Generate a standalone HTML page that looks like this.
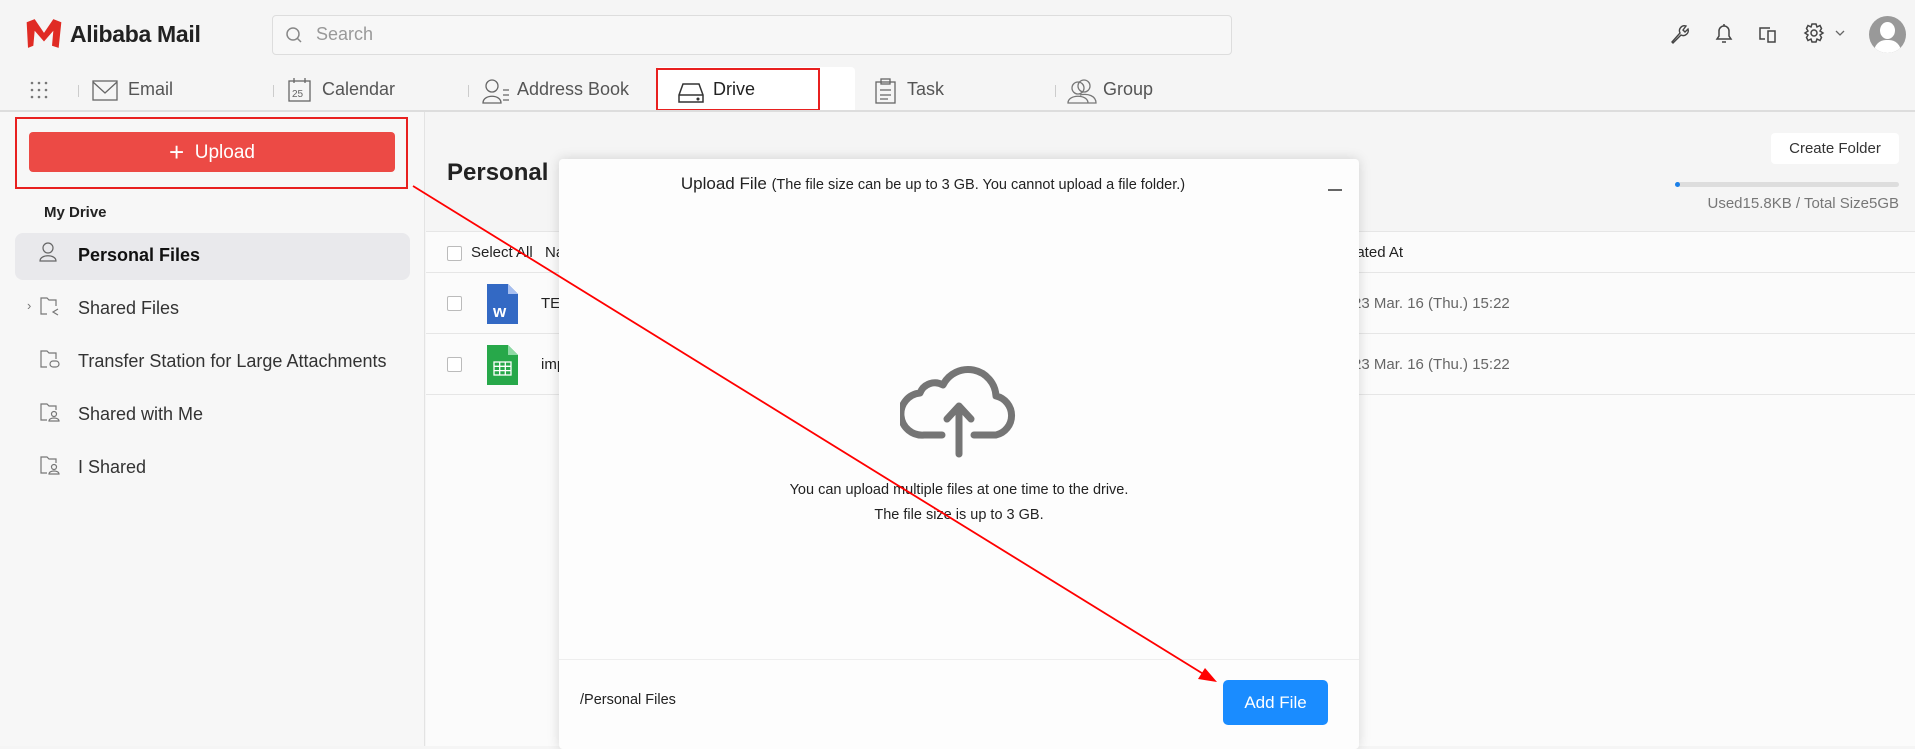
<!DOCTYPE html>
<html><head><meta charset="utf-8">
<style>
*{box-sizing:border-box;margin:0;padding:0}
body{width:1915px;height:746px;overflow:hidden;background:#f5f5f5;font-family:"Liberation Sans",Arial,sans-serif;color:#222;position:relative}
.abs{position:absolute}
.t{white-space:nowrap}
.nav{font-size:18px;color:#555;top:79px}
.side{font-size:18px;color:#333}
.cb{position:absolute;width:15px;height:15px;border:1.5px solid #bbb;background:#fff;border-radius:2px}
.line{position:absolute;height:1px;background:#e6e6e6}
</style></head><body>
<svg class="abs" style="left:24px;top:18px" width="40" height="32" viewBox="0 0 30 30" preserveAspectRatio="none"><path d="M2 4 L8 1 L15 14 L22 1 L28 4 L26 28 L21 26 L22 12 L15 22 L8 12 L7 26 L3 28 Z" fill="#e02b24"/></svg>
<div class="abs t" style="left:70px;top:21px;font-size:23px;font-weight:bold;color:#222;letter-spacing:-0.3px">Alibaba Mail</div>
<div class="abs" style="left:272px;top:15px;width:960px;height:40px;border:1px solid #ddd;border-radius:4px;background:#f7f7f7"></div>
<svg class="abs" style="left:285px;top:26px" width="18" height="18"><circle cx="8" cy="8" r="6" fill="none" stroke="#888" stroke-width="1.5"/><path d="M12.5 12.5 L16 16" stroke="#888" stroke-width="1.5"/></svg>
<div class="abs t" style="left:316px;top:24px;font-size:18px;color:#999">Search</div>
<svg class="abs" style="left:1668px;top:23px" width="22" height="22" viewBox="0 0 22 22" fill="none" stroke="#444" stroke-width="1.4"><path d="M4 19 L12 10 A5 5 0 0 1 18 3 L15 7 L17 9 L20 6 A5 5 0 0 1 13 12 L5 20 Z"/></svg>
<svg class="abs" style="left:1713px;top:22px" width="22" height="24" viewBox="0 0 22 24" fill="none" stroke="#444" stroke-width="1.5"><path d="M4 17 H18 L16 14 V9 A5 5 0 0 0 6 9 V14 Z"/><path d="M9 20 H13"/><path d="M11 2 V4"/></svg>
<svg class="abs" style="left:1757px;top:23px" width="22" height="22" viewBox="0 0 22 22" fill="none" stroke="#444" stroke-width="1.5"><path d="M13 5 H3 V16 H8"/><rect x="11" y="8" width="7" height="11"/></svg>
<svg class="abs" style="left:1803px;top:22px" width="22" height="22" viewBox="0 0 22 22" fill="none" stroke="#444" stroke-width="1.5"><circle cx="11" cy="11" r="3"/><path d="M9 2 H13 L14 5 L17 3.5 L18.5 6.5 L17 9 L20 11 L17 13 L18.5 15.5 L17 18.5 L14 17 L13 20 H9 L8 17 L5 18.5 L3.5 15.5 L5 13 L2 11 L5 9 L3.5 6.5 L5 3.5 L8 5 Z"/></svg>
<svg class="abs" style="left:1835px;top:29px" width="10" height="8"><path d="M1 2 L5 6 L9 2" fill="none" stroke="#666" stroke-width="1.3"/></svg>
<div class="abs" style="left:1869px;top:16px;width:37px;height:37px;border-radius:50%;background:#999;overflow:hidden">
<div class="abs" style="left:11px;top:6px;width:15px;height:17px;border-radius:50%;background:#fff"></div>
<div class="abs" style="left:5px;top:24px;width:27px;height:20px;border-radius:12px 12px 0 0;background:#fff"></div></div>
<svg class="abs" style="left:30px;top:81px" width="18" height="18"><g fill="#777"><circle cx="2" cy="2" r="1.3"/><circle cx="9" cy="2" r="1.3"/><circle cx="16" cy="2" r="1.3"/><circle cx="2" cy="9" r="1.3"/><circle cx="9" cy="9" r="1.3"/><circle cx="16" cy="9" r="1.3"/><circle cx="2" cy="16" r="1.3"/><circle cx="9" cy="16" r="1.3"/><circle cx="16" cy="16" r="1.3"/></g></svg>
<div class="abs" style="left:78px;top:85px;width:1px;height:12px;background:#ccc"></div>
<svg class="abs" style="left:92px;top:80px" width="26" height="22"><rect x="1" y="1" width="24" height="19" fill="none" stroke="#666" stroke-width="1.3"/><path d="M1 2 L13 13 L25 2" fill="none" stroke="#666" stroke-width="1.3"/></svg>
<div class="abs t nav" style="left:128px">Email</div>
<div class="abs" style="left:273px;top:85px;width:1px;height:12px;background:#ccc"></div>
<svg class="abs" style="left:287px;top:77px" width="26" height="26"><rect x="2" y="4" width="21" height="20" fill="none" stroke="#666" stroke-width="1.3"/><path d="M7 1 V6 M18 1 V6" stroke="#666" stroke-width="1.3"/><text x="5" y="20" font-size="10" fill="#666" font-family="Liberation Sans">25</text></svg>
<div class="abs t nav" style="left:322px">Calendar</div>
<div class="abs" style="left:468px;top:85px;width:1px;height:12px;background:#ccc"></div>
<svg class="abs" style="left:482px;top:78px" width="30" height="26" fill="none" stroke="#666" stroke-width="1.3"><circle cx="10" cy="8" r="6"/><path d="M1 25 C1 16 19 16 19 25 Z"/><path d="M21 12 H27 M21 17 H27 M21 22 H27"/></svg>
<div class="abs t nav" style="left:517px">Address Book</div>
<div class="abs" style="left:656px;top:67px;width:199px;height:44px;background:#fff;border-radius:4px 4px 0 0"></div>
<div class="abs" style="left:656px;top:68px;width:164px;height:43px;border:2px solid #e8201f"></div>
<svg class="abs" style="left:677px;top:82px" width="28" height="22" fill="none" stroke="#333" stroke-width="1.5"><path d="M2 13 L6 2 H22 L26 13 V20 H2 Z M2 13 H26"/><circle cx="21" cy="17" r="0.8" fill="#333"/></svg>
<div class="abs t nav" style="left:713px;color:#222">Drive</div>
<svg class="abs" style="left:874px;top:78px" width="24" height="26" fill="none" stroke="#666" stroke-width="1.3"><rect x="2" y="4" width="19" height="21"/><rect x="7" y="1" width="9" height="5"/><path d="M6 12 H17 M6 17 H17 M6 21 H14"/></svg>
<div class="abs t nav" style="left:907px">Task</div>
<div class="abs" style="left:1055px;top:85px;width:1px;height:12px;background:#ccc"></div>
<svg class="abs" style="left:1066px;top:78px" width="32" height="26" fill="none" stroke="#777" stroke-width="1.3"><circle cx="18" cy="8" r="6"/><circle cx="12" cy="10" r="6"/><path d="M2 25 C2 16 22 16 22 25 Z M14 17 C22 15 30 18 30 25 H22"/></svg>
<div class="abs t nav" style="left:1103px">Group</div>
<div class="abs" style="left:0;top:110px;width:1915px;height:2px;background:#ddd"></div>
<div class="abs" style="left:0;top:112px;width:425px;height:634px;background:#f7f7f7;border-right:1px solid #e3e3e3"></div>
<div class="abs" style="left:15px;top:117px;width:393px;height:72px;border:2px solid #e8201f"></div>
<div class="abs" style="left:29px;top:132px;width:366px;height:40px;background:#ec4a45;border-radius:4px;color:#fff;font-size:19px;text-align:center;line-height:40px"><span style="font-size:26px;vertical-align:-3px;font-weight:300">+</span>&nbsp; Upload</div>
<div class="abs t" style="left:44px;top:204px;font-size:15px;font-weight:bold;color:#222">My Drive</div>
<div class="abs" style="left:15px;top:233px;width:395px;height:47px;background:#e9e9ec;border-radius:8px"></div>
<svg class="abs" style="left:38px;top:242px" width="20" height="20" fill="none" stroke="#666" stroke-width="1.2"><circle cx="10" cy="6" r="5"/><path d="M2 19 C2 12 18 12 18 19 Z"/></svg>
<div class="abs t side" style="left:78px;top:245px;font-weight:bold;color:#111">Personal Files</div>
<div class="abs t" style="left:27px;top:298px;font-size:13px;color:#777">›</div>
<svg class="abs" style="left:39px;top:296px" width="22" height="20" fill="none" stroke="#777" stroke-width="1.2"><path d="M8 18 H2 V2 H8 L10 4 H17 V10"/><path d="M19 13 L14 16 L19 19"/></svg>
<div class="abs t side" style="left:78px;top:298px">Shared Files</div>
<svg class="abs" style="left:39px;top:349px" width="22" height="20" fill="none" stroke="#777" stroke-width="1.2"><path d="M8 18 H2 V2 H8 L10 4 H17 V10"/><rect x="11" y="12" width="9" height="6" rx="3"/></svg>
<div class="abs t side" style="left:78px;top:351px">Transfer Station for Large Attachments</div>
<svg class="abs" style="left:39px;top:402px" width="22" height="20" fill="none" stroke="#777" stroke-width="1.2"><path d="M8 18 H2 V2 H8 L10 4 H17 V8"/><circle cx="15" cy="12" r="2.5"/><path d="M10 19 C10 15 20 15 20 19 Z"/></svg>
<div class="abs t side" style="left:78px;top:404px">Shared with Me</div>
<svg class="abs" style="left:39px;top:455px" width="22" height="20" fill="none" stroke="#777" stroke-width="1.2"><path d="M8 18 H2 V2 H8 L10 4 H17 V8"/><circle cx="15" cy="12" r="2.5"/><path d="M10 19 C10 15 20 15 20 19 Z"/></svg>
<div class="abs t side" style="left:78px;top:457px">I Shared</div>
<div class="abs t" style="left:447px;top:159px;font-size:24px;font-weight:bold;color:#222">Personal</div>
<div class="abs t" style="left:1771px;top:133px;width:128px;height:31px;background:#fff;border-radius:4px;font-size:15px;color:#333;text-align:center;line-height:31px">Create Folder</div>
<div class="abs" style="left:1676px;top:182px;width:223px;height:5px;background:#ddd;border-radius:3px"></div>
<div class="abs" style="left:1675px;top:182px;width:5px;height:5px;background:#1a7fe8;border-radius:3px"></div>
<div class="abs t" style="right:16px;top:195px;font-size:15px;color:#777">Used15.8KB / Total Size5GB</div>
<div class="abs" style="left:426px;top:231px;width:1489px;height:515px;background:#fbfbfb"></div>
<div class="line" style="left:426px;top:231px;width:1489px"></div>
<div class="cb" style="left:447px;top:246px"></div>
<div class="abs t" style="left:471px;top:244px;font-size:15px;color:#222">Select All</div>
<div class="abs t" style="left:545px;top:244px;font-size:15px;color:#222">Na</div>
<div class="abs t" style="left:1343px;top:244px;font-size:15px;color:#222">reated At</div>
<div class="line" style="left:426px;top:272px;width:1489px"></div>
<div class="cb" style="left:447px;top:296px"></div>
<svg class="abs" style="left:487px;top:284px" width="31" height="40"><path d="M0 0 H21 L31 10 V40 H0 Z" fill="#3369c4"/><path d="M21 0 L31 10 H21 Z" fill="#a7bff0"/><text x="6" y="33" font-size="17" font-weight="bold" fill="#fff" font-family="Liberation Sans">w</text></svg>
<div class="abs t" style="left:541px;top:295px;font-size:15px;color:#222">TE</div>
<div class="abs t" style="left:1353px;top:295px;font-size:15px;color:#666">23 Mar. 16 (Thu.) 15:22</div>
<div class="line" style="left:426px;top:333px;width:1489px"></div>
<div class="cb" style="left:447px;top:357px"></div>
<svg class="abs" style="left:487px;top:345px" width="31" height="40"><path d="M0 0 H21 L31 10 V40 H0 Z" fill="#27a84a"/><path d="M21 0 L31 10 H21 Z" fill="#8ed9a4"/><g fill="none" stroke="#fff" stroke-width="1.3"><rect x="7" y="17" width="17" height="13"/><path d="M7 21.3 H24 M7 25.6 H24 M12.7 17 V30 M18.3 17 V30"/></g></svg>
<div class="abs t" style="left:541px;top:356px;font-size:15px;color:#222">imp</div>
<div class="abs t" style="left:1353px;top:356px;font-size:15px;color:#666">23 Mar. 16 (Thu.) 15:22</div>
<div class="line" style="left:426px;top:394px;width:1489px"></div>
<div class="abs" style="left:559px;top:159px;width:800px;height:590px;background:#fdfdfd;border-radius:4px;box-shadow:0 0 12px rgba(0,0,0,0.15)"></div>
<div class="abs t" style="left:559px;width:748px;top:174px;text-align:center;font-size:17px;color:#222">Upload File <span style="font-size:14.5px">(The file size can be up to 3 GB. You cannot upload a file folder.)</span></div>
<div class="abs" style="left:1328px;top:189px;width:14px;height:1.5px;background:#666"></div>
<svg class="abs" style="left:900px;top:364px" width="120" height="96" viewBox="0 0 120 96" fill="none" stroke="#757575" stroke-width="7" stroke-linecap="round" stroke-linejoin="round"><path d="M42 71 H24 A21 21 0 0 1 20 29 A16 16 0 0 1 43 21 A28 28 0 0 1 96 32 A20 20 0 0 1 96 71 H74"/><path d="M59 90 V42 M47 55 L59 42 L71 55"/></svg>
<div class="abs t" style="left:559px;width:800px;top:482px;text-align:center;font-size:14.5px;color:#222">You can upload multiple files at one time to the drive.</div>
<div class="abs t" style="left:559px;width:800px;top:507px;text-align:center;font-size:14.5px;color:#222">The file size is up to 3 GB.</div>
<div class="abs" style="left:559px;top:659px;width:800px;height:1px;background:#eee"></div>
<div class="abs t" style="left:580px;top:692px;font-size:14.5px;color:#222">/Personal Files</div>
<div class="abs" style="left:1223px;top:680px;width:105px;height:45px;background:#1a8cff;border-radius:5px;color:#fff;font-size:17px;text-align:center;line-height:45px">Add File</div>
<svg class="abs" style="left:0;top:0" width="1915" height="746"><line x1="413" y1="186" x2="1205" y2="675" stroke="#f00" stroke-width="1.8"/><path d="M1217 682 L1198 679 L1205 668 Z" fill="#f00"/></svg>
</body></html>
